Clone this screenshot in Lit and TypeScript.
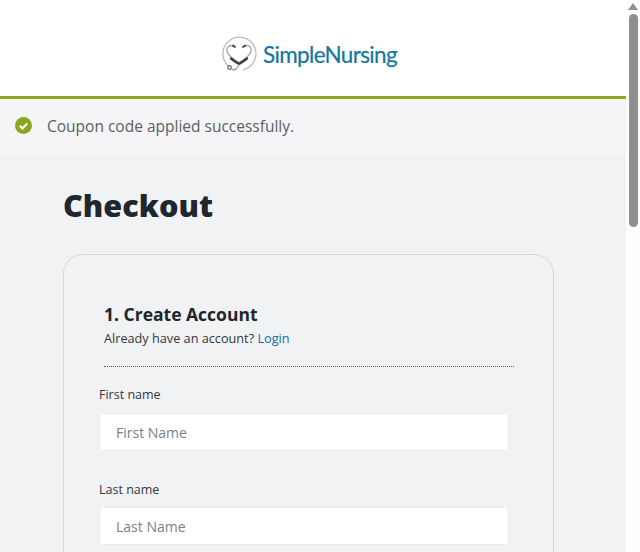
import { LitElement, html, css } from 'lit';
import { customElement } from 'lit/decorators.js';

@customElement('app-root')
export class AppRoot extends LitElement {
  static styles = css`
    :host {
      display: flex;
      height: 552px;
      overflow: hidden;
      font-family: 'Open Sans', 'Noto Sans', sans-serif;
      background: #fdfdfd;
    }

    .page {
      width: 626px;
      flex: none;
      background: #f1f2f4;
    }

    header {
      height: 96px;
      background: #fff;
      display: flex;
      align-items: center;
      justify-content: center;
      gap: 6px;
      padding: 12px 8px 0 0;
      box-sizing: border-box;
    }

    .brand {
      font-family: 'Lato', sans-serif;
      font-size: 22.5px;
      letter-spacing: -0.65px;
      color: #14769c;
      -webkit-text-stroke: 0.2px #14769c;
    }

    .alert {
      height: 58px;
      box-sizing: border-box;
      border-top: 3px solid #8fa81f;
      background: #f5f5f7;
      display: flex;
      align-items: center;
      gap: 15px;
      padding: 0 0 2px 15px;
      font-size: 15.5px;
      color: #5c5f64;
    }

    .content {
      padding: 28px 72px 0 63px;
    }

    h1 {
      margin: 0 0 26px 0;
      font-size: 30.6px;
      line-height: 46px;
      font-weight: 800;
      color: #20262d;
    }

    .card {
      border: 1px solid #d6d7da;
      border-radius: 20px;
      padding: 46px 44px 40px 35px;
    }

    h2 {
      margin: 0 0 0 5px;
      font-size: 17.5px;
      line-height: 26px;
      font-weight: 700;
      color: #212529;
    }

    .sub {
      margin: 1px 0 0 5px;
      font-size: 12.7px;
      line-height: 20px;
      color: #33373c;
    }

    .sub a {
      color: #0f6f9e;
      text-decoration: none;
    }

    .rule {
      margin: 18px -5px 0 5px;
      border-top: 1px dotted #55585c;
    }

    .field {
      margin-top: 19px;
    }

    .field + .field {
      margin-top: 30px;
    }

    label {
      display: block;
      font-size: 12.5px;
      line-height: 18px;
      color: #33373c;
      margin-bottom: 9px;
    }

    .field + .field label {
      margin-bottom: 8px;
    }

    input {
      display: block;
      width: 100%;
      height: 38px;
      box-sizing: border-box;
      padding: 0 16px;
      border: 1px solid #e9eaec;
      border-radius: 4px;
      background: #fff;
      font: 14px 'Open Sans', sans-serif;
    }

    input::placeholder {
      color: #7b8087;
      opacity: 1;
    }

    .scrollbar {
      flex: 1;
      display: flex;
      flex-direction: column;
      align-items: center;
      padding-top: 3px;
      box-sizing: border-box;
      gap: 3px;
    }

    .thumb {
      width: 9px;
      height: 213px;
      border-radius: 5px;
      background: #8f8f8f;
    }
  `;

  render() {
    return html`
      <div class="page">
        <header>
          <svg width="36" height="36" viewBox="0 0 36 36" fill="none">
            <path d="M8 30.500A16.500 16.500 0 1 1 22 33.800" stroke="#b9bbbd" stroke-width="1.300" />
            <path d="M12.500 10.500C8 8 4.500 12 6.500 16.500 8.500 21 14 24 18 27 22 24 27.500 21 29.500 16.500 31.500 12 28 8 23.500 10.500" stroke="#9a9d9f" stroke-width="1.200" />
            <path d="M10 22.500C13 25 15.500 26.500 18 28 20.500 26.500 23 25 26 22.500" stroke="#33444f" stroke-width="2.400" stroke-linecap="round" />
            <path d="M18 28C17 33 13 35 10.500 33" stroke="#8d9092" stroke-width="1.200" />
            <circle cx="8.500" cy="31.500" r="1.800" stroke="#5d6366" stroke-width="1.200" />
            <path d="M12 9.500l2 1.500M24 9.500l-2 1.500" stroke="#33444f" stroke-width="1.800" stroke-linecap="round" />
          </svg>
          <span class="brand">SimpleNursing</span>
        </header>
        <div class="alert">
          <svg width="17" height="17" viewBox="0 0 17 17">
            <circle cx="8.500" cy="8.500" r="8.500" fill="#8aa61e" />
            <path d="M4.800 8.800l2.600 2.600 4.800-5" fill="none" stroke="#fff" stroke-width="2.200" />
          </svg>
          <span>Coupon code applied successfully.</span>
        </div>
        <div class="content">
          <h1>Checkout</h1>
          <div class="card">
            <h2>1. Create Account</h2>
            <p class="sub">Already have an account? <a href="#">Login</a></p>
            <div class="rule"></div>
            <div class="field">
              <label>First name</label>
              <input placeholder="First Name" />
            </div>
            <div class="field">
              <label>Last name</label>
              <input placeholder="Last Name" />
            </div>
          </div>
        </div>
      </div>
      <div class="scrollbar">
        <svg width="10" height="8" viewBox="0 0 10 8"><path d="M5 0l5 7H0z" fill="#8f8f8f" /></svg>
        <div class="thumb"></div>
      </div>
    `;
  }
}
